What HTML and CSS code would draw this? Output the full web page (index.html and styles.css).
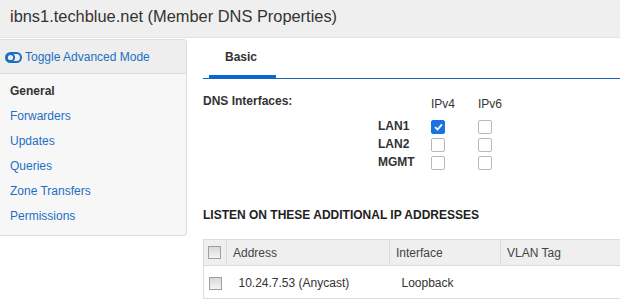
FILE: index.html
```html
<!DOCTYPE html>
<html>
<head>
<meta charset="utf-8">
<link rel="stylesheet" href="styles.css">
</head>
<body>
<header class="title-bar">ibns1.techblue.net (Member DNS Properties)</header>
<div class="layout">
  <aside class="sidebar">
    <div class="sidebar-head">
      <svg class="toggle-icon" width="17" height="11" viewBox="0 0 17 11">
        <rect x="1" y="1" width="15" height="9" rx="4.5" fill="none" stroke="#1c6fc2" stroke-width="2"/>
        <circle cx="5.5" cy="5.5" r="3.6" fill="none" stroke="#1c6fc2" stroke-width="2"/>
      </svg>
      <span class="link">Toggle Advanced Mode</span>
    </div>
    <nav class="side-nav">
      <div class="side-item active">General</div>
      <div class="side-item">Forwarders</div>
      <div class="side-item">Updates</div>
      <div class="side-item">Queries</div>
      <div class="side-item">Zone Transfers</div>
      <div class="side-item">Permissions</div>
    </nav>
  </aside>
  <main class="main">
    <div class="tabs">
      <div class="tab active">Basic</div>
    </div>
    <section class="interfaces">
      <div class="if-label">DNS Interfaces:</div>
      <div class="if-grid">
        <div></div>
        <div class="col-head">IPv4</div>
        <div class="col-head">IPv6</div>
        <div class="row-name">LAN1</div>
        <div><span class="cb checked"><svg width="9" height="8" viewBox="0 0 9 8"><path d="M1 4.2 L3.5 6.5 L8 1.3" fill="none" stroke="#fff" stroke-width="1.8"/></svg></span></div>
        <div><span class="cb"></span></div>
        <div class="row-name">LAN2</div>
        <div><span class="cb"></span></div>
        <div><span class="cb"></span></div>
        <div class="row-name">MGMT</div>
        <div><span class="cb"></span></div>
        <div><span class="cb"></span></div>
      </div>
    </section>
    <h3 class="section-title">LISTEN ON THESE ADDITIONAL IP ADDRESSES</h3>
    <table class="ip-table">
      <colgroup>
        <col class="c-check"><col class="c-addr"><col class="c-if"><col class="c-vlan">
      </colgroup>
      <thead>
        <tr>
          <th class="check-cell"><span class="gcb"></span></th>
          <th>Address</th>
          <th>Interface</th>
          <th>VLAN Tag</th>
        </tr>
      </thead>
      <tbody>
        <tr>
          <td class="check-cell"><span class="gcb body"></span></td>
          <td class="pad">10.24.7.53 (Anycast)</td>
          <td class="pad">Loopback</td>
          <td></td>
        </tr>
      </tbody>
    </table>
  </main>
</div>
</body>
</html>
```
FILE: styles.css
```css
* { box-sizing: border-box; }
html, body { margin: 0; padding: 0; }
body {
  font-family: "Liberation Sans", Arial, sans-serif;
  color: #333;
  background: #fff;
  width: 620px;
  height: 301px;
  overflow: hidden;
}
.title-bar {
  height: 38px;
  background: #efefef;
  border-bottom: 1px solid #e2e2e2;
  padding-left: 10px;
  font-size: 16.4px;
  line-height: 33px;
  color: #333;
}
.layout {
  display: flex;
  align-items: flex-start;
}
.sidebar {
  width: 187px;
  flex: none;
  margin-top: 1px;
  background: #f7f7f7;
  border: 1px solid #dcdcdc;
  border-left: none;
  border-radius: 0 4px 4px 0;
  height: 197px;
}
.sidebar-head {
  height: 34px;
  background: #eeeeee;
  border-bottom: 1px solid #dddddd;
  border-top-right-radius: 4px;
  display: flex;
  align-items: center;
  padding-left: 5px;
  gap: 3px;
}
.toggle-icon { flex: none; margin-top: 2px; }
.link {
  color: #1c6fc2;
  font-size: 12px;
}
.side-nav {
  padding-top: 5px;
}
.side-item {
  height: 25px;
  line-height: 24px;
  padding-left: 10px;
  font-size: 12px;
  color: #1c6fc2;
}
.side-item.active {
  color: #333;
  font-weight: bold;
}
.main {
  flex: 1;
  padding-left: 16px;
  min-width: 0;
}
.tabs {
  display: flex;
  border-bottom: 1px solid #1a62b8;
  height: 41px;
  padding-left: 6px;
}
.tab {
  width: 67px;
  padding-left: 16px;
  font-size: 12px;
  font-weight: bold;
  color: #333;
  line-height: 38px;
  border-bottom: 3px solid #0b66d6;
}
.interfaces {
  display: flex;
  margin-top: 15px;
}
.if-label {
  width: 175px;
  font-size: 12px;
  font-weight: bold;
  line-height: 14px;
}
.if-grid {
  margin-top: 2px;
  display: grid;
  grid-template-columns: 53px 47px 30px;
  grid-template-rows: 21px 18px 18px 18px;
  align-items: center;
  font-size: 12px;
}
.col-head {
  align-self: start;
  line-height: 16px;
  color: #333;
}
.row-name {
  font-weight: bold;
}
.cb {
  display: block;
  width: 14px;
  height: 14px;
  border: 1.5px solid #b8b8b8;
  border-radius: 2px;
  background: #fff;
  position: relative;
  top: 1px;
}
.cb.checked {
  background: #1a73e0;
  border-color: #1a73e0;
  display: flex;
  align-items: center;
  justify-content: center;
}
.section-title {
  margin: 37px 0 0;
  font-size: 12px;
  font-weight: bold;
  line-height: 14px;
  color: #222;
}
.ip-table {
  margin-top: 17px;
  border-collapse: collapse;
  table-layout: fixed;
  width: 440px;
  font-size: 12px;
}
.c-check { width: 23px; }
.c-addr { width: 163px; }
.c-if { width: 111px; }
.c-vlan { width: 143px; }
.ip-table th {
  height: 26px;
  background: #efefef;
  border: 1px solid #dcdcdc;
  font-weight: normal;
  text-align: left;
  padding: 0 0 0 6px;
  color: #444;
}
.ip-table td {
  height: 33px;
  border-bottom: 1px solid #dcdcdc;
  padding: 2px 0 0 6px;
}
.ip-table td.pad { padding-left: 12px; }
.ip-table .check-cell { padding-left: 4px; border-right: 1px solid #dcdcdc; }
.ip-table tbody .check-cell { border-right: none; border-left: 1px solid #dcdcdc; padding-left: 5px; }
.gcb {
  display: block;
  width: 13px;
  height: 13px;
  border: 1px solid #9e9e9e;
  background: linear-gradient(#d8d8d8, #f4f4f4);
}
```
